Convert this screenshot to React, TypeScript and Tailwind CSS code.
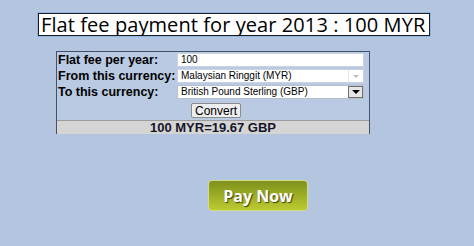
export default function App() {
  return (
    <div className="w-[474px] h-[246px] bg-[#b4c6df] overflow-hidden flex flex-col items-start">
      {/* heading box */}
      <div className="mt-[13px] ml-[38px] w-[392px] h-[23px] bg-white border border-[#1c1c1c] outline outline-1 outline-[#8fb6e6] flex items-center pl-[2px]">
        <span className="text-[20px] tracking-[0.08px] leading-none text-black whitespace-nowrap [font-family:'Open_Sans',sans-serif]">
          Flat fee payment for year 2013 : 100 MYR
        </span>
      </div>

      {/* converter panel */}
      <div className="mt-[15px] ml-[56px] w-[314px] bg-[#b9cae2] border-l border-t border-r border-[#44516b] [font-family:'Liberation_Sans',Arial,sans-serif]">
        <div className="grid grid-cols-[119px_187px] pl-[1px]">
          <div className="h-[16px] flex items-center text-[12.5px] font-bold text-black leading-none whitespace-nowrap">Flat fee per year:</div>
          <div className="h-[16px] flex items-center">
            <div className="w-full h-[14px] bg-white border border-[#c9d3df] text-[10px] leading-none flex items-center pl-[3px] text-black">100</div>
          </div>

          <div className="h-[16px] flex items-center text-[12.5px] font-bold text-black leading-none whitespace-nowrap">From this currency:</div>
          <div className="h-[16px] flex items-center">
            <div className="w-full h-[14px] bg-white border border-[#c9d3df] text-[10px] leading-none flex items-center pl-[3px] text-black">
              <span className="flex-1">Malaysian Ringgit (MYR)</span>
              <span className="w-[15px] h-[12px] border-l border-[#dde3ea] flex items-center justify-center">
                <span className="w-0 h-0 border-l-[3px] border-r-[3px] border-t-[3px] border-l-transparent border-r-transparent border-t-[#b9bec6]" />
              </span>
            </div>
          </div>

          <div className="h-[16px] flex items-center text-[12.5px] font-bold text-black leading-none whitespace-nowrap">To this currency:</div>
          <div className="h-[16px] flex items-center">
            <div className="w-full h-[14px] bg-white border border-[#b7c0cc] text-[10px] leading-none flex items-center pl-[3px] text-black">
              <span className="flex-1">British Pound Sterling (GBP)</span>
              <span className="w-[15px] h-[12px] bg-[#e6e6e6] border border-[#6f6f6f] flex items-center justify-center">
                <span className="w-0 h-0 border-l-[4px] border-r-[4px] border-t-[4px] border-l-transparent border-r-transparent border-t-black" />
              </span>
            </div>
          </div>

          <div />
          <div className="h-[20px] flex items-start pt-[3px] pl-[14px]">
            <button className="h-[15px] px-[3px] bg-[#eeeeee] border border-[#8c8c8c] rounded-[2px] text-[12px] leading-none text-black">
              Convert
            </button>
          </div>
        </div>

        <div className="h-[14px] bg-[#d5d5d5] border-t border-[#9c9c9c] flex items-center justify-center text-[13px] font-bold text-[#15152a] leading-none">
          100 MYR=19.67 GBP
        </div>
      </div>

      {/* pay button */}
      <button className="mt-[46px] ml-[208px] w-[100px] h-[31px] rounded-[4px] border border-[#d3dc86] bg-gradient-to-b from-[#7f911c] to-[#bccb31] text-white text-[16px] font-bold [text-shadow:1px_1px_1px_#3d4208] [font-family:'Open_Sans',sans-serif]">
        Pay Now
      </button>
    </div>
  );
}
